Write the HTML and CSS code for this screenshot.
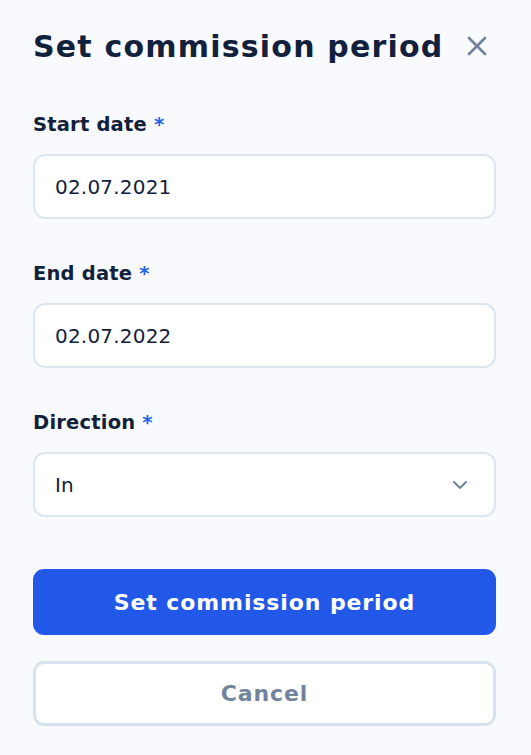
FILE: index.html
```html
<!DOCTYPE html>
<html lang="en">
<head>
    <meta charset="UTF-8">
    <meta name="viewport" content="width=device-width, initial-scale=1.0">
    <title>Set commission period</title>
    <link rel="stylesheet" href="styles.css">
</head>
<body>
    <div class="modal">
        <div class="header">
            <div class="title">Set commission period</div>
            <button class="close" aria-label="Close">
                <svg width="22" height="22" viewBox="0 0 22 22">
                    <path d="M3 3L19 19M19 3L3 19" stroke="#6f829a" stroke-width="2.6" stroke-linecap="round"/>
                </svg>
            </button>
        </div>

        <div class="field">
            <label class="label">Start date <span class="req">*</span></label>
            <div class="input">02.07.2021</div>
        </div>

        <div class="field">
            <label class="label">End date <span class="req">*</span></label>
            <div class="input">02.07.2022</div>
        </div>

        <div class="field">
            <label class="label">Direction <span class="req">*</span></label>
            <div class="input select">
                <span>In</span>
                <svg width="16" height="10" viewBox="0 0 16 10">
                    <path d="M2 2L8 8L14 2" fill="none" stroke="#6f829a" stroke-width="2" stroke-linecap="round" stroke-linejoin="round"/>
                </svg>
            </div>
        </div>

        <div class="actions">
            <button class="btn primary">Set commission period</button>
            <button class="btn secondary">Cancel</button>
        </div>
    </div>
</body>
</html>
```

FILE: styles.css
```css
body {
    margin: 0;
    background-color: #f8fafd;
    font-family: 'DejaVu Sans', Inter, sans-serif;
    color: #12213b;
}
.modal {
    padding: 26px 35px 0 33px;
    display: flex;
    flex-direction: column;
}
.header {
    display: flex;
    align-items: center;
    justify-content: space-between;
    height: 40px;
}
.title {
    font-size: 30px;
    font-weight: 700;
    letter-spacing: 1.2px;
    color: #12213b;
}
.close {
    border: none;
    background: none;
    padding: 0;
    margin-right: 8px;
    display: flex;
    cursor: pointer;
}
.field {
    display: flex;
    flex-direction: column;
    margin-top: 47px;
}
.field + .field {
    margin-top: 43px;
}
.label {
    font-size: 19.5px;
    font-weight: 700;
    line-height: 24px;
    letter-spacing: 0.2px;
    color: #12213b;
    margin-bottom: 17px;
}
.req {
    color: #2563eb;
}
.input {
    box-sizing: border-box;
    height: 65px;
    border: 2px solid #dce6f0;
    border-radius: 12px;
    background-color: #fff;
    padding: 0 20px;
    display: flex;
    align-items: center;
    font-size: 20px;
    letter-spacing: 0.2px;
    color: #12213b;
}
.select {
    justify-content: space-between;
    padding-right: 26px;
}
.actions {
    display: flex;
    flex-direction: column;
    gap: 26px;
    margin-top: 52px;
}
.btn {
    height: 66px;
    border-radius: 11px;
    font-family: inherit;
    font-size: 22px;
    font-weight: 600;
    letter-spacing: 0.9px;
    cursor: pointer;
}
.primary {
    border: none;
    background-color: #2158e8;
    color: #fff;
}
.secondary {
    height: 65px;
    border: 3px solid #d6e2ed;
    background-color: #fff;
    color: #72849b;
}
```
